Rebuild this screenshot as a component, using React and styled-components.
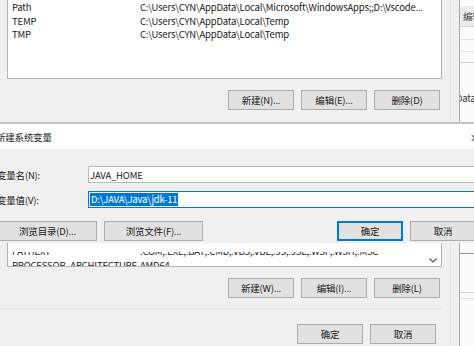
import React from 'react';
import styled, { createGlobalStyle } from 'styled-components';

const GlobalStyle = createGlobalStyle`
  html, body {
    margin: 0;
    padding: 0;
    background: #f0f0f0;
  }
  body {
    font-family: "Noto Sans CJK SC", "Noto Sans", sans-serif;
    font-size: 9.5px;
    letter-spacing: -0.2px;
    color: #1a1a1a;
  }
`;

const Screen = styled.div`
  width: 474px;
  height: 346px;
  overflow: hidden;
  display: flex;
  flex-direction: column;
`;

const Band = styled.div`
  display: flex;
  height: ${p => p.$h}px;
  flex-shrink: 0;
  overflow: hidden;
`;

const BackWindow = styled.div`
  width: 451px;
  flex-shrink: 0;
  box-sizing: border-box;
  background: #f0f0f0;
  border-right: 1px solid #e2e2e2;
  display: flex;
  flex-direction: column;
`;

const Gutter = styled.div`
  width: 9px;
  flex-shrink: 0;
  box-sizing: border-box;
  background: #f0f0f0;
  border-right: 1px solid #a9a9a9;
`;

const RightStrip = styled.div`
  flex: 1;
  background: #fbfbfb;
  display: flex;
  flex-direction: column;
  overflow: hidden;
  white-space: nowrap;
`;

const StripHeader = styled.div`
  margin-top: 6px;
  height: 20px;
  background: #ececec;
  border-bottom: 1px solid #d4d4d4;
  display: flex;
  align-items: center;
  padding-left: 3px;
  color: #444;
`;

const StripLine = styled.div`
  height: ${p => p.$h}px;
  flex-shrink: 0;
  border-bottom: 1px solid ${p => p.$c || '#e4e4e4'};
`;

const StripText = styled.div`
  margin-top: 28px;
  margin-left: -4px;
  color: #333;
`;

const ListBox = styled.div`
  margin-left: 7px;
  width: 435px;
  height: ${p => p.$h}px;
  box-sizing: border-box;
  background: #fff;
  border: 1px solid #b4b4b4;
  border-top: none;
  display: flex;
  overflow: hidden;
`;

const Rows = styled.div`
  flex: 1;
  display: flex;
  flex-direction: column;
  justify-content: ${p => (p.$bottom ? 'flex-end' : 'flex-start')};
  padding-top: ${p => (p.$bottom ? 0 : 1)}px;
  margin-top: ${p => p.$clip || 0}px;
  overflow: hidden;
  min-width: 0;
`;

const ListRow = styled.div`
  display: grid;
  grid-template-columns: 128px 1fr;
  padding-left: 4px;
  height: 13.5px;
  line-height: 13.5px;
  flex-shrink: 0;
  white-space: nowrap;
  &:last-child {
    margin-bottom: ${p => p.$cut || 0}px;
  }
`;

const ScrollCol = styled.div`
  width: 16px;
  display: flex;
  align-items: flex-end;
  justify-content: center;
  padding-bottom: 3px;
  box-sizing: border-box;
`;

const ButtonRow = styled.div`
  display: flex;
  justify-content: flex-end;
  gap: ${p => p.$gap || 7}px;
  margin-top: ${p => p.$mt}px;
  padding-right: ${p => p.$pr}px;
`;

const Button = styled.button`
  width: ${p => p.$w || 66}px;
  height: 20px;
  flex-shrink: 0;
  box-sizing: border-box;
  padding: 0;
  margin: 0;
  font: inherit;
  letter-spacing: inherit;
  color: #1a1a1a;
  background: #e1e1e1;
  border: 1px solid ${p => (p.$primary ? '#0078d7' : '#adadad')};
  box-shadow: ${p => (p.$primary ? 'inset 0 0 0 1px #0078d7' : 'none')};
  white-space: nowrap;
`;

const Separator = styled.div`
  margin-top: 10px;
  height: 1px;
  width: 442px;
  background: #dfdfdf;
`;

const Dialog = styled.div`
  height: 121px;
  flex-shrink: 0;
  display: flex;
  flex-direction: column;
  border-top: 2px solid #c4c4c4;
  box-sizing: border-box;
  background: #f0f0f0;
  overflow: hidden;
`;

const TitleBar = styled.div`
  height: 25px;
  flex-shrink: 0;
  background: #fff;
  display: flex;
  align-items: center;
  justify-content: space-between;
  white-space: nowrap;
`;

const Title = styled.span`
  margin-left: -4px;
`;

const Close = styled.span`
  margin-right: -5px;
  font-size: 11px;
  color: #555;
`;

const DialogBody = styled.div`
  padding-top: 17px;
  display: flex;
  flex-direction: column;
  gap: 8px;
`;

const Field = styled.div`
  display: flex;
  align-items: center;
  height: 17px;
  white-space: nowrap;
`;

const Label = styled.span`
  width: 91px;
  margin-left: -3px;
  flex-shrink: 0;
`;

const Input = styled.div`
  flex: 1;
  height: 17px;
  margin-right: -20px;
  box-sizing: border-box;
  background: #fff;
  border: 1px solid ${p => (p.$focus ? '#0078d7' : '#b8b8b8')};
  display: flex;
  align-items: center;
  padding-left: 1px;
`;

const Selected = styled.span`
  background: #0078d7;
  color: #fff;
  line-height: 13px;
  padding: 0 1px;
`;

const DialogButtons = styled.div`
  display: flex;
  margin-top: 5px;
  gap: 7px;
  margin-left: -2px;
  margin-right: -2px;
`;

const Push = styled.div`
  flex: 1;
`;

const Chevron = () => (
  <svg width="8" height="5" viewBox="0 0 8 5">
    <path d="M0.5 0.5 L4 4 L7.5 0.5" fill="none" stroke="#555" strokeWidth="1.1" />
  </svg>
);

export default function App() {
  return (
    <>
      <GlobalStyle />
      <Screen>
        <Band $h={122}>
          <BackWindow>
            <ListBox $h={79}>
              <Rows>
                <ListRow>
                  <span>Path</span>
                  <span>C:\Users\CYN\AppData\Local\Microsoft\WindowsApps;;D:\Vscode...</span>
                </ListRow>
                <ListRow>
                  <span>TEMP</span>
                  <span>C:\Users\CYN\AppData\Local\Temp</span>
                </ListRow>
                <ListRow>
                  <span>TMP</span>
                  <span>C:\Users\CYN\AppData\Local\Temp</span>
                </ListRow>
              </Rows>
            </ListBox>
            <ButtonRow $mt={11} $pr={10}>
              <Button>新建(N)...</Button>
              <Button>编辑(E)...</Button>
              <Button>删除(D)</Button>
            </ButtonRow>
          </BackWindow>
          <Gutter />
          <RightStrip>
            <StripHeader>编辑</StripHeader>
            <StripLine $h={12} />
            <StripLine $h={11} />
            <StripLine $h={10} $c="#cfcfcf" />
            <StripText>Data</StripText>
          </RightStrip>
        </Band>

        <Dialog>
          <TitleBar>
            <Title>新建系统变量</Title>
            <Close>✕</Close>
          </TitleBar>
          <DialogBody>
            <Field>
              <Label>变量名(N):</Label>
              <Input>JAVA_HOME</Input>
            </Field>
            <Field>
              <Label>变量值(V):</Label>
              <Input $focus>
                <Selected>D:\JAVA\Java\jdk-11</Selected>
              </Input>
            </Field>
            <DialogButtons>
              <Button $w={99}>浏览目录(D)...</Button>
              <Button $w={99}>浏览文件(F)...</Button>
              <Push />
              <Button $primary>确定</Button>
              <Button>取消</Button>
            </DialogButtons>
          </DialogBody>
        </Dialog>

        <Band $h={103}>
          <BackWindow>
            <ListBox $h={24}>
              <Rows $bottom $clip={9}>
                <ListRow>
                  <span>PATHEXT</span>
                  <span>.COM;.EXE;.BAT;.CMD;.VBS;.VBE;.JS;.JSE;.WSF;.WSH;.MSC</span>
                </ListRow>
                <ListRow $cut={-6}>
                  <span>PROCESSOR_ARCHITECTURE</span>
                  <span>AMD64</span>
                </ListRow>
              </Rows>
              <ScrollCol>
                <Chevron />
              </ScrollCol>
            </ListBox>
            <ButtonRow $mt={11} $pr={10}>
              <Button>新建(W)...</Button>
              <Button>编辑(I)...</Button>
              <Button>删除(L)</Button>
            </ButtonRow>
            <Separator />
            <ButtonRow $mt={15} $pr={14}>
              <Button>确定</Button>
              <Button>取消</Button>
            </ButtonRow>
          </BackWindow>
          <Gutter />
          <RightStrip>
            <StripLine $h={10} $c="#6f9fd0" />
            <StripLine $h={38} $c="#d6d6d6" />
            <StripLine $h={5} $c="#e0e0e0" />
          </RightStrip>
        </Band>
      </Screen>
    </>
  );
}
